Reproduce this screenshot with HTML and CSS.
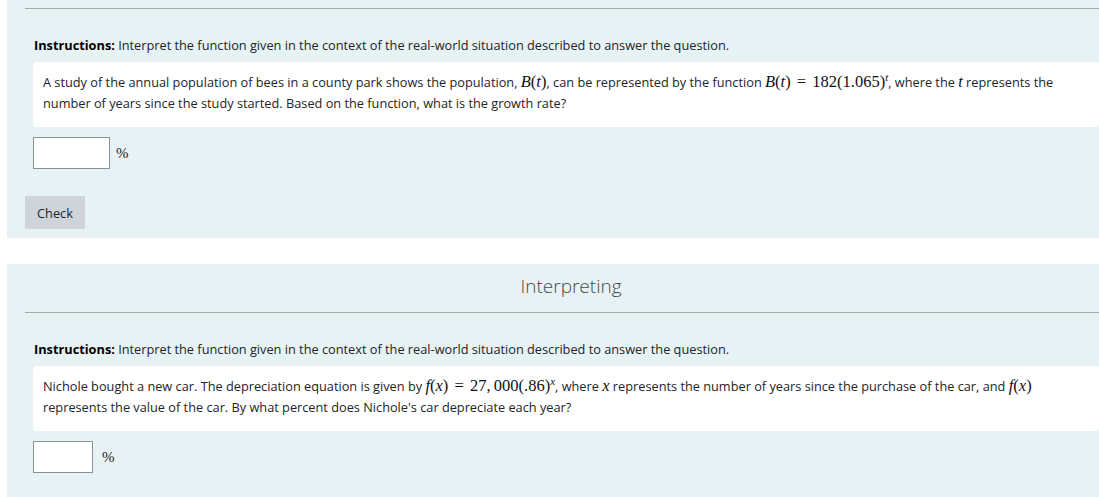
FILE: index.html
```html
<!DOCTYPE html>
<html>
<head>
<meta charset="utf-8">
<link rel="stylesheet" href="styles.css">
</head>
<body>
<div class="panel first">
  <hr class="rule">
  <div class="question">
    <p class="instr"><b>Instructions:</b> Interpret the function given in the context of the real-world situation described to answer the question.</p>
    <div class="card">A study of the annual population of bees in a county park shows the population, <span class="m"><i>B</i>(<i>t</i>)</span>, can be represented by the function <span class="m"><i>B</i>(<i>t</i>) <span class="op">=</span> 182(1.065)<sup><i>t</i></sup></span>, where the <span class="m"><i>t</i></span> represents the number of years since the study started. Based on the function, what is the growth rate?</div>
    <div class="answer"><span class="box wide"></span><span class="pct">%</span></div>
  </div>
  <button class="check">Check</button>
</div>
<div class="panel second">
  <h2 class="title">Interpreting</h2>
  <hr class="rule">
  <div class="question">
    <p class="instr"><b>Instructions:</b> Interpret the function given in the context of the real-world situation described to answer the question.</p>
    <div class="card">Nichole bought a new car. The depreciation equation is given by <span class="m"><i>f</i>(<i>x</i>) <span class="op">=</span> 27,&#8201;000(.86)<sup><i>x</i></sup></span>, where <span class="m"><i>x</i></span> represents the number of years since the purchase of the car, and <span class="m"><i>f</i>(<i>x</i>)</span> represents the value of the car. By what percent does Nichole's car depreciate each year?</div>
    <div class="answer"><span class="box narrow"></span><span class="pct">%</span></div>
  </div>
</div>
</body>
</html>
```
FILE: styles.css
```css
html, body {
  margin: 0;
  padding: 0;
  background: #ffffff;
  font-family: "Open Sans", "Noto Sans", sans-serif;
  font-size: 12.75px;
  color: #212529;
}
.panel {
  background: #e6f2f4;
  margin-left: 7px;
  padding: 8px 0 9px 18px;
}
.second {
  margin-top: 26px;
  padding-top: 9px;
  padding-bottom: 40px;
}
.rule {
  border: 0;
  border-top: 1px solid #a8a8a8;
  margin: 0;
  height: 0;
}
.title {
  margin: 0 0 13px 0;
  padding-left: 18px;
  text-align: center;
  font-weight: 300;
  font-size: 19px;
  line-height: 26px;
  color: #444a50;
}
.question {
  padding-left: 8px;
}
.instr {
  margin: 26px 0 7px 1px;
  line-height: 20px;
}
.instr b {
  font-weight: 700;
  color: #000;
}
.card {
  background: #ffffff;
  border-radius: 4px;
  padding: 10px 10px 13px 10px;
  line-height: 21px;
}
.m {
  font-family: "Liberation Serif", "DejaVu Serif", serif;
  font-size: 16.5px;
  line-height: 1;
  color: #111;
}
.m i {
  font-style: italic;
}
.m sup {
  font-size: 11px;
  line-height: 0;
  vertical-align: 6px;
}
.op {
  padding: 0 2px;
}
.answer {
  display: flex;
  align-items: center;
  margin-top: 10px;
  height: 32px;
}
.box {
  display: block;
  height: 30px;
  background: #fff;
  border: 1px solid #8c9196;
}
.wide { width: 75px; }
.narrow { width: 58px; }
.pct {
  font-family: "Liberation Serif", serif;
  font-size: 15px;
  margin-left: 6px;
  color: #222;
}
.second .pct { margin-left: 9px; }
.check {
  display: block;
  margin-top: 27px;
  width: 60px;
  height: 33px;
  border: 0;
  border-radius: 0;
  background: #ced4da;
  font-family: "Open Sans", "Noto Sans", sans-serif;
  font-size: 12.75px;
  color: #212529;
  padding: 0;
}
```
